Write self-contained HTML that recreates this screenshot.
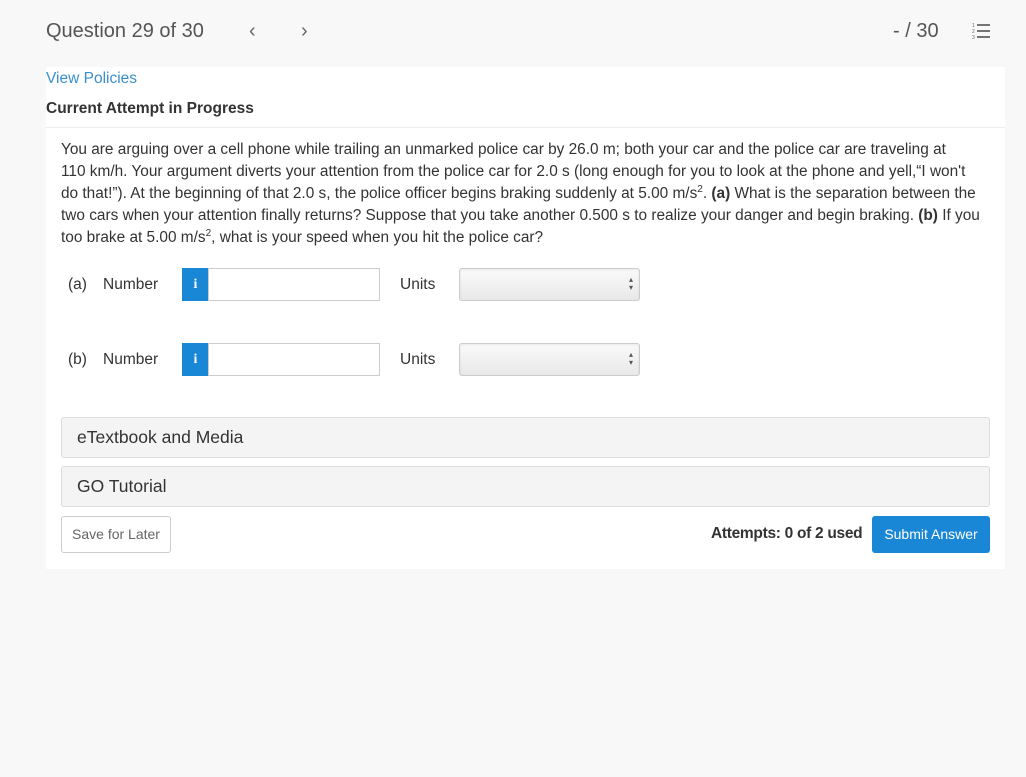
<!DOCTYPE html>
<html><head><meta charset="utf-8"><style>
*{box-sizing:border-box;margin:0;padding:0}
body{width:1026px;height:777px;background:#f8f8f8;font-family:"Liberation Sans",sans-serif;color:#333;position:relative;overflow:hidden}
.a{position:absolute;white-space:nowrap}
.panel{position:absolute;left:46px;top:67px;width:959px;height:502px;background:#fff}
.p{position:absolute;left:61px;top:139px;font-size:15.4px;line-height:22px;color:#333;white-space:nowrap}
.p sup{font-size:10px;line-height:0;vertical-align:6px}
.info{position:absolute;width:27px;height:33px;background:#1a87d6;color:#fff;font-family:"Liberation Serif",serif;font-weight:bold;font-size:14px;text-align:center;line-height:33px}
.inp{position:absolute;width:172px;height:33px;border:1px solid #ccc;background:#fff}
.sel{position:absolute;width:181px;height:33px;border:1px solid #ccc;border-radius:3px;background:linear-gradient(#fafafa,#e8e8e8);box-shadow:inset 0 1px 2px rgba(0,0,0,.08)}
.sel:after{content:"\25B4\A\25BE";white-space:pre;position:absolute;right:6px;top:7px;font-size:8px;line-height:8px;color:#555}
.box{position:absolute;left:61px;width:929px;height:41px;background:#f4f4f4;border:1px solid #ddd;border-radius:3px;font-size:17.5px;padding-left:15px;line-height:39px;color:#333}
</style></head><body>
<div class="a" style="left:46px;top:20px;font-size:20px;color:#555">Question 29 of 30</div>
<div class="a" style="left:249px;top:20px;font-size:20px;color:#666">&#8249;</div>
<div class="a" style="left:301px;top:20px;font-size:20px;color:#666">&#8250;</div>
<div class="a" style="left:893px;top:20px;font-size:20px;color:#555">- / 30</div>
<svg class="a" style="left:970px;top:22px" width="22" height="20" viewBox="0 0 22 20">
<g stroke="#666" stroke-width="1.8"><line x1="7" y1="3" x2="20" y2="3"/><line x1="7" y1="9" x2="20" y2="9"/><line x1="7" y1="15" x2="20" y2="15"/></g>
<g font-size="5" fill="#666" font-family="Liberation Sans"><text x="2" y="5">1</text><text x="2" y="11">2</text><text x="2" y="17">3</text></g></svg>
<div class="panel"></div>
<div class="a" style="left:46px;top:70px;font-size:15.5px;color:#3a8fcf">View Policies</div>
<div class="a" style="left:46px;top:100px;font-size:15.5px;font-weight:bold;color:#333">Current Attempt in Progress</div>
<div class="a" style="left:46px;top:127px;width:959px;height:1px;background:#eee"></div>
<div class="p">You are arguing over a cell phone while trailing an unmarked police car by 26.0 m; both your car and the police car are traveling at<br>110 km/h. Your argument diverts your attention from the police car for 2.0 s (long enough for you to look at the phone and yell,“I won't<br>do that!”). At the beginning of that 2.0 s, the police officer begins braking suddenly at 5.00 m/s<sup>2</sup>. <b>(a)</b> What is the separation between the<br>two cars when your attention finally returns? Suppose that you take another 0.500 s to realize your danger and begin braking. <b>(b)</b> If you<br>too brake at 5.00 m/s<sup>2</sup>, what is your speed when you hit the police car?</div>

<div class="a" style="left:68px;top:276px;font-size:15.5px">(a)</div>
<div class="a" style="left:103px;top:276px;font-size:15.5px">Number</div>
<div class="info" style="left:182px;top:268px">i</div>
<div class="inp" style="left:208px;top:268px"></div>
<div class="a" style="left:400px;top:276px;font-size:15.5px">Units</div>
<div class="sel" style="left:459px;top:268px"></div>

<div class="a" style="left:68px;top:351px;font-size:15.5px">(b)</div>
<div class="a" style="left:103px;top:351px;font-size:15.5px">Number</div>
<div class="info" style="left:182px;top:343px">i</div>
<div class="inp" style="left:208px;top:343px"></div>
<div class="a" style="left:400px;top:351px;font-size:15.5px">Units</div>
<div class="sel" style="left:459px;top:343px"></div>

<div class="box" style="top:417px">eTextbook and Media</div>
<div class="box" style="top:466px">GO Tutorial</div>

<div class="a" style="left:61px;top:516px;width:110px;height:37px;border:1px solid #ccc;border-radius:3px;background:#fff;font-size:14px;color:#666;text-align:center;line-height:35px">Save for Later</div>
<div class="a" style="left:711px;top:525px;font-size:15.5px;font-weight:bold;color:#333;letter-spacing:-0.3px">Attempts: 0 of 2 used</div>
<div class="a" style="left:872px;top:516px;width:118px;height:37px;border-radius:3px;background:#1a87d6;font-size:14px;color:#fff;text-align:center;line-height:37px">Submit Answer</div>
</body></html>
